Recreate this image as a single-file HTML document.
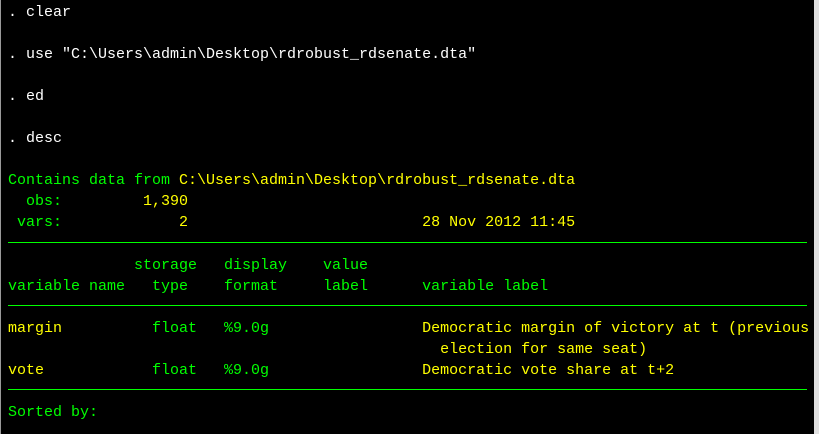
<!DOCTYPE html>
<html><head><meta charset="utf-8"><style>
html,body{margin:0;padding:0;background:#000;width:819px;height:434px;overflow:hidden;position:relative}
.l{position:absolute;left:0;top:0;width:1px;height:434px;background:#9a9a9a}
.sb{position:absolute;right:0;top:0;width:5px;height:434px;background:#e0e0e0}
pre{position:absolute;left:8px;top:2px;margin:0;font-family:"Liberation Mono",monospace;font-size:15px;line-height:21.05px;color:#00ff00}
.w{color:#fff}.y{color:#ffff00}
.r{position:absolute;left:8px;width:799px;height:1px;background:#00ff00}
</style></head><body>
<div class="l"></div><div class="sb"></div>
<pre><span class="w">. clear

. use "C:\Users\admin\Desktop\rdrobust_rdsenate.dta"

. ed

. desc</span>

Contains data from <span class="y">C:\Users\admin\Desktop\rdrobust_rdsenate.dta</span>
  obs:         <span class="y">1,390</span>
 vars:             <span class="y">2</span>                          <span class="y">28 Nov 2012 11:45</span>

              storage   display    value
variable name   type    format     label      variable label

<span class="y">margin</span>          float   %9.0g                 <span class="y">Democratic margin of victory at t (previous</span>
                                                <span class="y">election for same seat)</span>
<span class="y">vote</span>            float   %9.0g                 <span class="y">Democratic vote share at t+2</span>

Sorted by:</pre>
<div class="r" style="top:242px"></div>
<div class="r" style="top:305px"></div>
<div class="r" style="top:389px"></div>
</body></html>
